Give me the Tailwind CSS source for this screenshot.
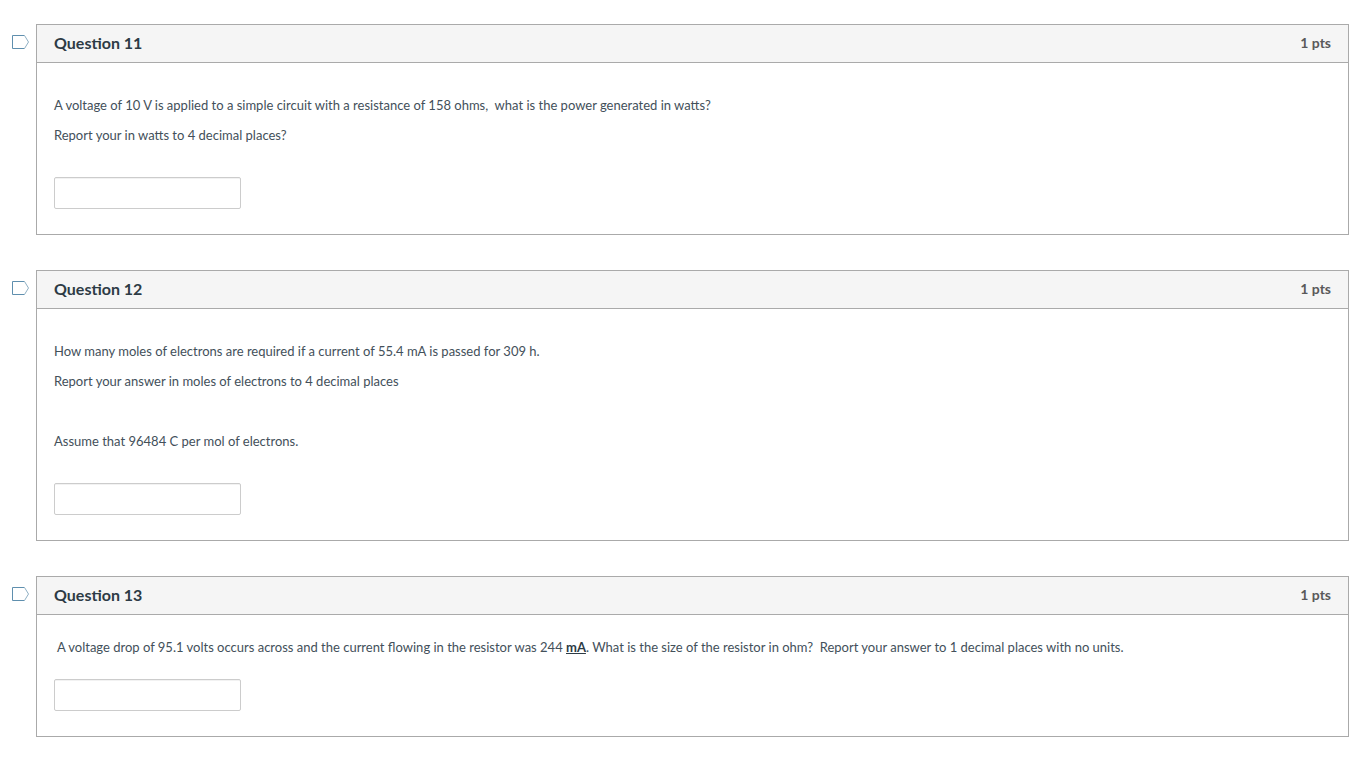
<!DOCTYPE html>
<html lang="en">
<head>
    <meta charset="UTF-8">
    <meta name="viewport" content="width=device-width, initial-scale=1.0">
    <title>Quiz</title>
    <script src="https://cdn.jsdelivr.net/npm/@tailwindcss/browser@4"></script>
</head>
<body class="bg-white font-['Lato',sans-serif] text-[13px] leading-5 text-[#2d3b45]">
    <main class="flex flex-col gap-[35px] pt-6 pr-2 pl-3">
        <!-- Question 11 -->
        <section class="flex items-start gap-[7px]">
            <button type="button" aria-label="Flag question 11" class="mt-[11px]">
                <svg class="h-[14px] w-[17px]" viewBox="0 0 17 14" fill="none"><path stroke="#5f8fae" d="M12.500 .5H.5v13h12"/><path stroke="#8fb0c4" d="M12.500 .5l4 6.500-4 6.500"/></svg>
            </button>
            <div class="flex-1 border border-[#aaaaaa]">
                <div class="flex h-[38px] items-center justify-between border-b border-[#aaaaaa] bg-[#f5f5f5] px-[17px] pb-0.5 font-bold">
                    <h2 class="text-base">Question 11</h2>
                    <span class="text-sm text-[#595959]">1 pts</span>
                </div>
                <div class="px-[17px] pt-8 pb-[25px] text-[#43505a]">
                    <p class="mb-[10px]">A voltage of 10 V is applied to a simple circuit with a resistance of 158 ohms,&nbsp; what is the power generated in watts?</p>
                    <p>Report your in watts to 4 decimal places?</p>
                    <input type="text" aria-label="Answer to question 11" class="mt-8 block h-8 w-[187px] rounded-xs border border-[#cccccc] px-2 inset-shadow-2xs">
                </div>
            </div>
        </section>

        <!-- Question 12 -->
        <section class="flex items-start gap-[7px]">
            <button type="button" aria-label="Flag question 12" class="mt-[11px]">
                <svg class="h-[14px] w-[17px]" viewBox="0 0 17 14" fill="none"><path stroke="#5f8fae" d="M12.500 .5H.5v13h12"/><path stroke="#8fb0c4" d="M12.500 .5l4 6.500-4 6.500"/></svg>
            </button>
            <div class="flex-1 border border-[#aaaaaa]">
                <div class="flex h-[38px] items-center justify-between border-b border-[#aaaaaa] bg-[#f5f5f5] px-[17px] pb-0.5 font-bold">
                    <h2 class="text-base">Question 12</h2>
                    <span class="text-sm text-[#595959]">1 pts</span>
                </div>
                <div class="px-[17px] pt-8 pb-[25px] text-[#43505a]">
                    <p class="mb-[10px]">How many moles of electrons are required if a current of 55.4 mA is passed for 309 h.</p>
                    <p class="mb-[10px]">Report your answer in moles of electrons to 4 decimal places</p>
                    <p class="mb-[10px]">&nbsp;</p>
                    <p>Assume that 96484 C per mol of electrons.</p>
                    <input type="text" aria-label="Answer to question 12" class="mt-8 block h-8 w-[187px] rounded-xs border border-[#cccccc] px-2 inset-shadow-2xs">
                </div>
            </div>
        </section>

        <!-- Question 13 -->
        <section class="flex items-start gap-[7px]">
            <button type="button" aria-label="Flag question 13" class="mt-[11px]">
                <svg class="h-[14px] w-[17px]" viewBox="0 0 17 14" fill="none"><path stroke="#5f8fae" d="M12.500 .5H.5v13h12"/><path stroke="#8fb0c4" d="M12.500 .5l4 6.500-4 6.500"/></svg>
            </button>
            <div class="flex-1 border border-[#aaaaaa]">
                <div class="flex h-[38px] items-center justify-between border-b border-[#aaaaaa] bg-[#f5f5f5] px-[17px] pb-0.5 font-bold">
                    <h2 class="text-base">Question 13</h2>
                    <span class="text-sm text-[#595959]">1 pts</span>
                </div>
                <div class="px-[17px] pt-[22px] pb-[25px] text-[#43505a]">
                    <p>&nbsp;A voltage drop of 95.1 volts occurs across and the current flowing in the resistor was 244 <strong class="text-[#2d3b45] underline">mA</strong>. What is the size of the resistor in ohm?&nbsp; Report your answer to 1 decimal places with no units.</p>
                    <input type="text" aria-label="Answer to question 13" class="mt-[22px] block h-8 w-[187px] rounded-xs border border-[#cccccc] px-2 inset-shadow-2xs">
                </div>
            </div>
        </section>
    </main>
</body>
</html>
